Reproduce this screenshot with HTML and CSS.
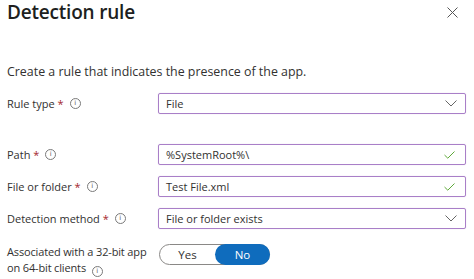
FILE: index.html
```html
<!DOCTYPE html>
<html>
<head>
<meta charset="utf-8">
<link rel="stylesheet" href="styles.css">
</head>
<body>
<div class="panel">
  <div class="header">
    <h1 class="title">Detection rule</h1>
    <svg class="close" width="11" height="11" viewBox="0 0 11 11"><path d="M0.5 0.5 L10.5 10.5 M10.5 0.5 L0.5 10.5" stroke="#555" stroke-width="1" fill="none"/></svg>
  </div>
  <p class="desc">Create a rule that indicates the presence of the app.</p>

  <div class="row row-first">
    <div class="label"><span>Rule type <span class="req">*</span></span><span class="info">i</span></div>
    <div class="field"><span class="val">File</span><svg class="chev" width="12" height="7" viewBox="0 0 12 7"><path d="M0.5 0.5 L6 6 L11.5 0.5" stroke="#666" stroke-width="1" fill="none"/></svg></div>
  </div>

  <div class="row row-gap">
    <div class="label"><span>Path <span class="req">*</span></span><span class="info">i</span></div>
    <div class="field"><span class="val">%SystemRoot%\</span><svg class="check" width="11" height="8" viewBox="0 0 11 8"><path d="M0.5 4 L3.8 7.2 L10.5 0.5" stroke="#5fa93a" stroke-width="1" fill="none"/></svg></div>
  </div>

  <div class="row">
    <div class="label"><span>File or folder <span class="req">*</span></span><span class="info">i</span></div>
    <div class="field"><span class="val">Test File.xml</span><svg class="check" width="11" height="8" viewBox="0 0 11 8"><path d="M0.5 4 L3.8 7.2 L10.5 0.5" stroke="#5fa93a" stroke-width="1" fill="none"/></svg></div>
  </div>

  <div class="row">
    <div class="label"><span>Detection method <span class="req">*</span></span><span class="info">i</span></div>
    <div class="field"><span class="val">File or folder exists</span><svg class="chev" width="12" height="7" viewBox="0 0 12 7"><path d="M0.5 0.5 L6 6 L11.5 0.5" stroke="#666" stroke-width="1" fill="none"/></svg></div>
  </div>

  <div class="row row-toggle">
    <div class="label label-wrap">Associated with a 32-bit app<br>on 64-bit clients <span class="info">i</span></div>
    <div class="toggle"><span class="opt">Yes</span><span class="opt on">No</span></div>
  </div>
</div>
</body>
</html>
```

FILE: styles.css
```css
html, body {
  margin: 0;
  padding: 0;
  background: #ffffff;
}
body {
  font-family: "Open Sans", "Noto Sans", sans-serif;
  color: #323130;
  font-size: 11px;
}
.panel {
  padding: 0 8px 0 7px;
}
.header {
  display: flex;
  justify-content: space-between;
  align-items: center;
  height: 24px;
}
.title {
  margin: 0;
  font-size: 19px;
  font-weight: 600;
  color: #201f1e;
  letter-spacing: -0.2px;
}
.close {
  margin-right: 8px;
}
.desc {
  margin: 40px 0 0 0;
  line-height: 16px;
  font-size: 12.4px;
}
.row {
  display: flex;
  align-items: center;
  height: 21px;
  margin-top: 11px;
}
.row-first {
  margin-top: 13px;
}
.row-gap {
  margin-top: 30px;
}
.row-toggle {
  align-items: flex-start;
  margin-top: 15px;
  height: auto;
}
.label {
  width: 151px;
  flex: none;
  display: flex;
  align-items: center;
  gap: 6px;
  font-size: 11px;
  white-space: nowrap;
}
.label-wrap {
  display: block;
  line-height: 16px;
  letter-spacing: -0.15px;
}
.label-wrap .info {
  margin-left: 3px;
}
.req {
  color: #a4262c;
}
.info {
  display: inline-flex;
  align-items: center;
  justify-content: center;
  width: 9px;
  height: 9px;
  border: 1px solid #7a7a7a;
  border-radius: 50%;
  font-size: 7px;
  line-height: 1;
  color: #605e5c;
  font-family: "DejaVu Sans", sans-serif;
  vertical-align: -1px;
  letter-spacing: 0;
}
.field {
  width: 308px;
  height: 21px;
  box-sizing: border-box;
  border: 1.5px solid #a97fc8;
  border-radius: 2px;
  display: flex;
  align-items: center;
  justify-content: space-between;
  padding: 0 8px 0 7px;
  box-shadow: 0 0 1px rgba(150, 100, 190, 0.4);
}
.val {
  font-size: 11px;
  color: #323130;
}
.check {
  margin-right: 2px;
}
.toggle {
  display: flex;
  width: 111px;
  height: 21px;
  box-sizing: border-box;
  border: 1px solid #8a8886;
  border-radius: 11px;
  margin-top: 0;
  margin-left: 1px;
}
.opt {
  flex: 1;
  display: flex;
  align-items: center;
  justify-content: center;
  font-size: 11.5px;
  color: #323130;
}
.opt.on {
  background: #0f6cbd;
  color: #ffffff;
  border-radius: 11px;
  margin: -1px -1px -1px 0;
}
```
